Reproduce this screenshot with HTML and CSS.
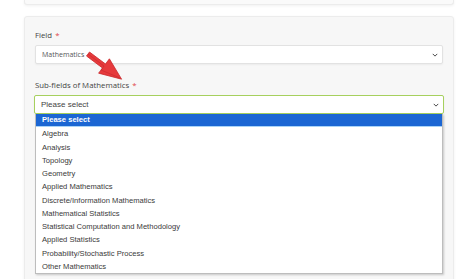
FILE: index.html
```html
<!DOCTYPE html>
<html lang="en">
<head>
  <meta charset="UTF-8">
  <meta name="viewport" content="width=device-width, initial-scale=1.0">
  <title>Sub-fields</title>
  <link rel="stylesheet" href="styles.css">
</head>
<body>
  <div class="page">
    <div class="card card-top"></div>

    <div class="card card-form">
      <div class="label">Field <span class="req">*</span></div>
      <div class="select">
        <span>Mathematics</span>
        <svg class="chevron" viewBox="0 0 8 5" width="6" height="4"><path d="M1 1l3 3 3-3" fill="none" stroke="#444" stroke-width="1.3"/></svg>
      </div>

      <div class="label label-sub">Sub-fields of Mathematics <span class="req">*</span></div>
      <div class="select select-open">
        <span>Please select</span>
        <svg class="chevron" viewBox="0 0 8 5" width="6" height="4"><path d="M1 1l3 3 3-3" fill="none" stroke="#444" stroke-width="1.3"/></svg>
      </div>
      <ul class="options">
        <li class="selected">Please select</li>
        <li>Algebra</li>
        <li>Analysis</li>
        <li>Topology</li>
        <li>Geometry</li>
        <li>Applied Mathematics</li>
        <li>Discrete/Information Mathematics</li>
        <li>Mathematical Statistics</li>
        <li>Statistical Computation and Methodology</li>
        <li>Applied Statistics</li>
        <li>Probability/Stochastic Process</li>
        <li>Other Mathematics</li>
      </ul>
    </div>

    <!-- red pointer arrow drawn over the form -->
    <svg class="pointer" viewBox="0 0 46 36" width="46" height="36">
      <path d="M9.5 4 L25.5 16 L29.4 10.8 L41.6 31.2 L18.6 25.2 L22.5 20 L6.5 8 Z" fill="#e63a3c" stroke="#c9282c" stroke-width="0.8" stroke-linejoin="round"/>
      <path d="M8 6 L24 18 L21 22 L40 30" fill="none" stroke="#b81f24" stroke-width="0.8" opacity="0.5"/>
    </svg>
  </div>
</body>
</html>
```

FILE: styles.css
```css
body {
  margin: 0;
  background: #fff;
  font-family: 'Open Sans', sans-serif;
}
.page {
  position: relative;
  padding: 0 20px 0 24px;
  height: 279px;
  overflow: hidden;
}
.card {
  background: #f7f7f7;
  border: 1px solid #ececec;
  box-shadow: 0 1px 3px rgba(0, 0, 0, 0.06);
}
.card-top {
  height: 5px;
  margin-top: -1px;
  border-top: none;
  border-radius: 0 0 3px 3px;
  background: #fafafa;
}
.card-form {
  margin-top: 11px;
  padding: 12px 10px 20px 10px;
  border-radius: 3px;
  height: 260px;
}
.label {
  font-size: 7.8px;
  line-height: 12px;
  color: #444;
  margin-bottom: 4px;
}
.label-sub {
  margin-top: 15px;
}
.req {
  color: #e0454a;
  margin-left: 1px;
}
.select {
  display: flex;
  align-items: center;
  justify-content: space-between;
  height: 19px;
  box-sizing: border-box;
  padding: 0 4px 0 6px;
  background: #fff;
  border: 1px solid #e2e2e2;
  border-radius: 2px;
  box-shadow: 0 1px 2px rgba(0, 0, 0, 0.05);
  font-size: 7px;
  color: #555;
}
.select-open {
  height: 19px;
  margin-left: -1px;
  margin-right: -1px;
  border: 1px solid #a6d05e;
  color: #444;
  font-family: 'Liberation Sans', Arial, sans-serif;
  font-size: 8px;
}
.chevron {
  display: block;
}
.options {
  list-style: none;
  margin: 0;
  padding: 0;
  background: #fff;
  border: 1px solid #bdbdbd;
  border-top: none;
  box-shadow: 1px 1px 2px rgba(0, 0, 0, 0.2);
  font-family: 'Liberation Sans', Arial, sans-serif;
  font-size: 7.6px;
  color: #3a3a3a;
}
.options li {
  height: 13.25px;
  line-height: 13.25px;
  padding-left: 6px;
}
.options .selected {
  background: #1b66d3;
  color: #fff;
  font-weight: bold;
  border-bottom: 1px solid #a9d3f7;
  height: 12.25px;
  line-height: 12.25px;
}
.pointer {
  position: absolute;
  left: 80px;
  top: 48px;
}
```
